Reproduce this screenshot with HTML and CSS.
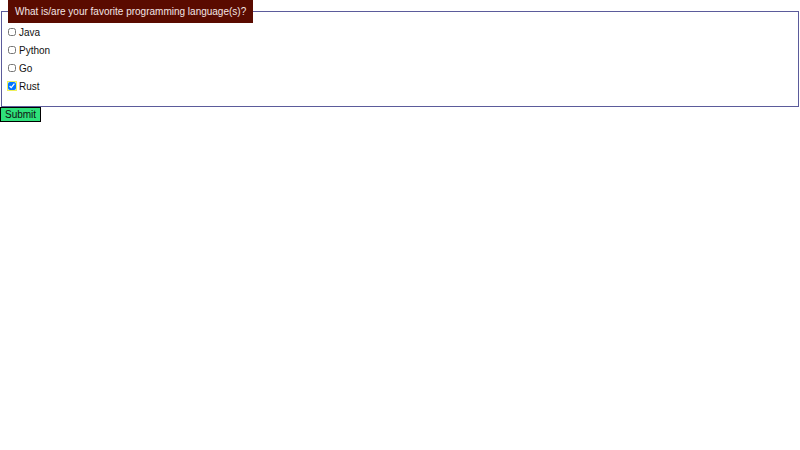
FILE: index.html
```html
<!DOCTYPE html>
<html>
<head>
<meta charset="utf-8">
<link rel="stylesheet" href="styles.css">
</head>
<body>
<form class="survey">
  <fieldset class="group">
    <legend class="question">What is/are your favorite programming language(s)?</legend>
    <div class="option"><input type="checkbox" id="java"><label for="java">Java</label></div>
    <div class="option"><input type="checkbox" id="python"><label for="python">Python</label></div>
    <div class="option"><input type="checkbox" id="go"><label for="go">Go</label></div>
    <div class="option"><input type="checkbox" id="rust" checked><label for="rust">Rust</label></div>
  </fieldset>
  <button type="submit" class="submit">Submit</button>
</form>
</body>
</html>
```
FILE: styles.css
```css
html, body {
  margin: 0;
  padding: 0;
  background: #ffffff;
}
body {
  font-family: "Liberation Sans", Arial, sans-serif;
  font-size: 10px;
  color: #111;
}
.survey {
  margin: 0;
}
.group {
  margin: 0 1px;
  border: 1px solid #5b5b9b;
  padding: 0 6px 11px;
}
.question {
  padding: 6px 7px;
  line-height: 11px;
  background: #5a0b00;
  color: #f3e5e5;
  margin: 0;
}
.option {
  display: flex;
  align-items: center;
  height: 18px;
}
.option input {
  width: 8px;
  height: 8px;
  margin: 0 3px 0 0;
}
.option input:checked {
  outline: 1px solid #eef05a;
  outline-offset: 0;
}
.option label {
  line-height: 11px;
}
.submit {
  display: block;
  margin: 0;
  padding: 1px 4px;
  border: 1px solid #000;
  background: #2ee07a;
  font-family: "Liberation Sans", Arial, sans-serif;
  font-size: 10px;
  line-height: 11px;
  color: #111;
}
```
